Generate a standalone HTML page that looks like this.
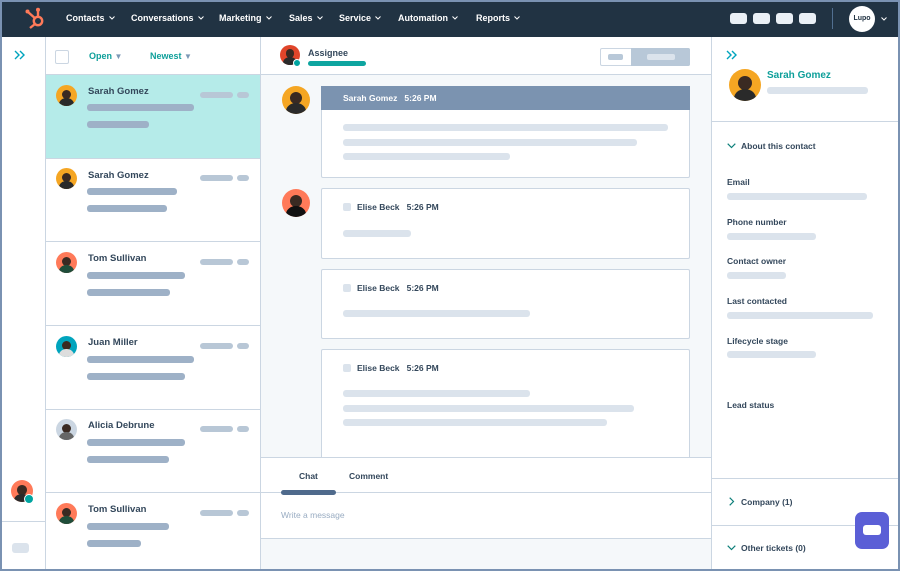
<!DOCTYPE html>
<html><head><meta charset="utf-8"><style>
*{margin:0;padding:0;box-sizing:border-box}
body{width:900px;height:571px;overflow:hidden;background:#7a92b2;font-family:"Liberation Sans",sans-serif;position:relative}
.a{position:absolute}
.nav{left:2px;top:2px;width:896px;height:35px;background:#213343}
.ni{position:absolute;top:13px;color:#fff;font-size:9px;font-weight:bold}
.ni svg{margin-left:4px;vertical-align:1px}
.w{background:#fff}
.bar{position:absolute;height:7px;border-radius:3px;background:#9eb1c7}
.lb{position:absolute;height:7px;border-radius:3px;background:#dbe3ec}
.rb{position:absolute;height:6px;border-radius:3px;background:#b8c7d6}
.nm{position:absolute;font-size:9.5px;font-weight:bold;color:#33475b}
.av{position:absolute;border-radius:50%;overflow:hidden}
.av i{position:absolute;left:28%;top:22%;width:44%;height:44%;border-radius:50%;background:#3a2a22}
.av b{position:absolute;left:15%;top:62%;width:70%;height:60%;border-radius:50% 50% 0 0;background:#2a2a2a}
.card{position:absolute;left:321px;width:369px;background:#fff;border:1px solid #cbd6e2;border-radius:2px}
.mh{position:absolute;font-size:8.5px;color:#33475b;font-weight:bold}
.mh s{display:inline-block;width:8px;height:8px;background:#dbe3ec;border-radius:2px;margin-right:6px;vertical-align:-1px;text-decoration:none}
.lab{position:absolute;left:727px;font-size:8.5px;color:#33475b;font-weight:bold}
.hl{position:absolute;height:1px;background:#cbd6e2}
.vl{position:absolute;width:1px;background:#cbd6e2}
</style></head><body>
<div class="a nav"></div>
<svg class="a" style="left:24px;top:7px" width="24" height="24" viewBox="0 0 24 24"><g stroke="#ff7a59" stroke-width="2.4" fill="none"><circle cx="14" cy="14" r="4.2"/><line x1="14" y1="9.8" x2="14" y2="3"/><line x1="10.8" y1="11" x2="4" y2="5"/><line x1="11" y1="17" x2="6" y2="21"/></g><circle cx="14" cy="2.8" r="2" fill="#ff7a59"/><circle cx="3.5" cy="4.5" r="2" fill="#ff7a59"/></svg>
<div class="ni" style="left:66px">Contacts<svg width="6" height="4" viewBox="0 0 6 4"><path d="M0.5 0.5L3 3L5.5 0.5" stroke="#fff" fill="none"/></svg></div>
<div class="ni" style="left:131px">Conversations<svg width="6" height="4" viewBox="0 0 6 4"><path d="M0.5 0.5L3 3L5.5 0.5" stroke="#fff" fill="none"/></svg></div>
<div class="ni" style="left:219px">Marketing<svg width="6" height="4" viewBox="0 0 6 4"><path d="M0.5 0.5L3 3L5.5 0.5" stroke="#fff" fill="none"/></svg></div>
<div class="ni" style="left:289px">Sales<svg width="6" height="4" viewBox="0 0 6 4"><path d="M0.5 0.5L3 3L5.5 0.5" stroke="#fff" fill="none"/></svg></div>
<div class="ni" style="left:339px">Service<svg width="6" height="4" viewBox="0 0 6 4"><path d="M0.5 0.5L3 3L5.5 0.5" stroke="#fff" fill="none"/></svg></div>
<div class="ni" style="left:398px">Automation<svg width="6" height="4" viewBox="0 0 6 4"><path d="M0.5 0.5L3 3L5.5 0.5" stroke="#fff" fill="none"/></svg></div>
<div class="ni" style="left:476px">Reports<svg width="6" height="4" viewBox="0 0 6 4"><path d="M0.5 0.5L3 3L5.5 0.5" stroke="#fff" fill="none"/></svg></div>
<div class="a" style="left:730px;top:13px;width:17px;height:11px;background:#eaf0f6;border-radius:3px"></div>
<div class="a" style="left:753px;top:13px;width:17px;height:11px;background:#eaf0f6;border-radius:3px"></div>
<div class="a" style="left:776px;top:13px;width:17px;height:11px;background:#eaf0f6;border-radius:3px"></div>
<div class="a" style="left:799px;top:13px;width:17px;height:11px;background:#eaf0f6;border-radius:3px"></div>
<div class="a" style="left:832px;top:8px;width:1px;height:21px;background:#516f90"></div>
<div class="a" style="left:849px;top:6px;width:26px;height:26px;background:#fff;border-radius:50%;font-size:7px;font-weight:bold;color:#213343;text-align:center;line-height:26px">Lupo</div>
<svg class="a" style="left:881px;top:17px" width="6" height="4" viewBox="0 0 6 4"><path d="M0.5 0.5L3 3L5.5 0.5" stroke="#fff" fill="none"/></svg>

<!-- left rail -->
<div class="a w" style="left:2px;top:37px;width:43px;height:532px"></div>
<svg class="a" style="left:14px;top:50px" width="12" height="10" viewBox="0 0 12 10"><path d="M1 1L5 5L1 9M6 1L10 5L6 9" stroke="#00a4bd" stroke-width="1.4" fill="none"/></svg>
<div class="av" style="left:11px;top:480px;width:22px;height:22px;background:#ff7a59"><i></i><b></b></div>
<div class="a" style="left:24px;top:494px;width:10px;height:10px;border-radius:50%;background:#00a4a0;border:1.5px solid #fff"></div>
<div class="hl" style="left:2px;top:521px;width:43px"></div>
<div class="a" style="left:12px;top:543px;width:17px;height:10px;background:#dbe3ec;border-radius:3px"></div>
<div class="vl" style="left:45px;top:37px;height:532px"></div>

<!-- list -->
<div class="a w" style="left:46px;top:37px;width:214px;height:532px"></div>
<div class="a" style="left:55px;top:50px;width:14px;height:14px;border:1px solid #cbd6e2;border-radius:2px"></div>
<div class="a" style="left:89px;top:51px;font-size:9px;font-weight:bold;color:#0e9f9a">Open <span style="color:#7c98b6;font-size:8px">▼</span></div>
<div class="a" style="left:150px;top:51px;font-size:9px;font-weight:bold;color:#0e9f9a">Newest <span style="color:#7c98b6;font-size:8px">▼</span></div>
<div class="hl" style="left:46px;top:74px;width:214px"></div>
<div class="a" style="left:46px;top:75px;width:214px;height:83px;background:#b5ebe9"></div>

<div class="av" style="left:56px;top:85px;width:21px;height:21px;background:#f5a623"><i></i><b></b></div>
<div class="nm" style="left:88px;top:86px">Sarah Gomez</div>
<div class="bar" style="left:87px;top:104px;width:107px"></div><div class="bar" style="left:87px;top:121px;width:62px"></div>
<div class="rb" style="left:200px;top:92px;width:33px"></div><div class="rb" style="left:237px;top:92px;width:12px"></div>
<div class="hl" style="left:46px;top:158px;width:214px"></div>

<div class="av" style="left:56px;top:168px;width:21px;height:21px;background:#f5a623"><i></i><b></b></div>
<div class="nm" style="left:88px;top:170px">Sarah Gomez</div>
<div class="bar" style="left:87px;top:188px;width:90px"></div><div class="bar" style="left:87px;top:205px;width:80px"></div>
<div class="rb" style="left:200px;top:175px;width:33px"></div><div class="rb" style="left:237px;top:175px;width:12px"></div>
<div class="hl" style="left:46px;top:241px;width:214px"></div>

<div class="av" style="left:56px;top:252px;width:21px;height:21px;background:#ff7a59"><i></i><b style="background:#1f4d3a"></b></div>
<div class="nm" style="left:88px;top:253px">Tom Sullivan</div>
<div class="bar" style="left:87px;top:272px;width:98px"></div><div class="bar" style="left:87px;top:289px;width:83px"></div>
<div class="rb" style="left:200px;top:259px;width:33px"></div><div class="rb" style="left:237px;top:259px;width:12px"></div>
<div class="hl" style="left:46px;top:325px;width:214px"></div>

<div class="av" style="left:56px;top:336px;width:21px;height:21px;background:#00a4bd"><i></i><b style="background:#ddd"></b></div>
<div class="nm" style="left:88px;top:337px">Juan Miller</div>
<div class="bar" style="left:87px;top:356px;width:107px"></div><div class="bar" style="left:87px;top:373px;width:98px"></div>
<div class="rb" style="left:200px;top:343px;width:33px"></div><div class="rb" style="left:237px;top:343px;width:12px"></div>
<div class="hl" style="left:46px;top:409px;width:214px"></div>

<div class="av" style="left:56px;top:419px;width:21px;height:21px;background:#cbd6e2"><i></i><b style="background:#666"></b></div>
<div class="nm" style="left:88px;top:420px">Alicia Debrune</div>
<div class="bar" style="left:87px;top:439px;width:98px"></div><div class="bar" style="left:87px;top:456px;width:82px"></div>
<div class="rb" style="left:200px;top:426px;width:33px"></div><div class="rb" style="left:237px;top:426px;width:12px"></div>
<div class="hl" style="left:46px;top:492px;width:214px"></div>

<div class="av" style="left:56px;top:503px;width:21px;height:21px;background:#ff7a59"><i></i><b style="background:#1f4d3a"></b></div>
<div class="nm" style="left:88px;top:504px">Tom Sullivan</div>
<div class="bar" style="left:87px;top:523px;width:82px"></div><div class="bar" style="left:87px;top:540px;width:54px"></div>
<div class="rb" style="left:200px;top:510px;width:33px"></div><div class="rb" style="left:237px;top:510px;width:12px"></div>
<div class="vl" style="left:260px;top:37px;height:532px"></div>

<!-- conversation -->
<div class="a" style="left:261px;top:37px;width:450px;height:532px;background:#f5f8fa"></div>
<div class="a w" style="left:261px;top:37px;width:450px;height:37px"></div>
<div class="hl" style="left:261px;top:74px;width:450px"></div>
<div class="av" style="left:280px;top:45px;width:20px;height:20px;background:#e0452a"><i></i><b></b></div>
<div class="a" style="left:293px;top:59px;width:8px;height:8px;border-radius:50%;background:#00a4a0;border:1px solid #fff"></div>
<div class="a" style="left:308px;top:48px;font-size:9px;font-weight:bold;color:#33475b">Assignee</div>
<div class="a" style="left:308px;top:61px;width:58px;height:5px;border-radius:3px;background:#0ea5a0"></div>
<div class="a" style="left:600px;top:48px;width:90px;height:18px;border:1px solid #cbd6e2;border-radius:2px;background:#fff"></div>
<div class="a" style="left:631px;top:48px;width:59px;height:18px;background:#b8c8d8;border-radius:0 2px 2px 0"></div>
<div class="a" style="left:608px;top:54px;width:15px;height:6px;background:#b8c8d8;border-radius:2px"></div>
<div class="a" style="left:647px;top:54px;width:28px;height:6px;background:#dbe3ec;border-radius:2px"></div>

<div class="av" style="left:282px;top:86px;width:28px;height:28px;background:#f5a623"><i></i><b></b></div>
<div class="card" style="top:86px;height:92px"></div>
<div class="a" style="left:321px;top:86px;width:369px;height:24px;background:#7b93b0"></div>
<div class="a" style="left:343px;top:93px;font-size:8.5px;font-weight:bold;color:#fff">Sarah Gomez&nbsp;&nbsp; 5:26 PM</div>
<div class="lb" style="left:343px;top:124px;width:325px"></div><div class="lb" style="left:343px;top:139px;width:294px"></div><div class="lb" style="left:343px;top:153px;width:167px"></div>

<div class="av" style="left:282px;top:189px;width:28px;height:28px;background:#ff7a59"><i></i><b style="background:#111"></b></div>
<div class="card" style="top:188px;height:71px"></div>
<div class="mh" style="left:343px;top:202px"><s></s>Elise Beck&nbsp;&nbsp; 5:26 PM</div>
<div class="lb" style="left:343px;top:230px;width:68px"></div>

<div class="card" style="top:269px;height:70px"></div>
<div class="mh" style="left:343px;top:283px"><s></s>Elise Beck&nbsp;&nbsp; 5:26 PM</div>
<div class="lb" style="left:343px;top:310px;width:187px"></div>

<div class="card" style="top:349px;height:120px"></div>
<div class="mh" style="left:343px;top:363px"><s></s>Elise Beck&nbsp;&nbsp; 5:26 PM</div>
<div class="lb" style="left:343px;top:390px;width:187px"></div><div class="lb" style="left:343px;top:405px;width:291px"></div><div class="lb" style="left:343px;top:419px;width:264px"></div>

<div class="a w" style="left:261px;top:457px;width:450px;height:81px;border-top:1px solid #cbd6e2"></div>
<div class="a" style="left:299px;top:471px;font-size:8.5px;font-weight:bold;color:#33475b">Chat</div>
<div class="a" style="left:349px;top:471px;font-size:8.5px;font-weight:bold;color:#33475b">Comment</div>
<div class="hl" style="left:261px;top:492px;width:450px"></div>
<div class="a" style="left:281px;top:490px;width:55px;height:5px;border-radius:3px;background:#4f6a8c"></div>
<div class="a" style="left:281px;top:510px;font-size:8.5px;color:#99acc2">Write a message</div>
<div class="hl" style="left:261px;top:538px;width:450px"></div>
<div class="vl" style="left:711px;top:37px;height:532px"></div>

<!-- right panel -->
<div class="a w" style="left:712px;top:37px;width:186px;height:532px"></div>
<svg class="a" style="left:726px;top:50px" width="12" height="10" viewBox="0 0 12 10"><path d="M1 1L5 5L1 9M6 1L10 5L6 9" stroke="#00a4bd" stroke-width="1.4" fill="none"/></svg>
<div class="av" style="left:729px;top:69px;width:32px;height:32px;background:#f5a623"><i></i><b></b></div>
<div class="a" style="left:767px;top:70px;font-size:10px;font-weight:bold;color:#0e9f9a">Sarah Gomez</div>
<div class="lb" style="left:767px;top:87px;width:101px"></div>
<div class="hl" style="left:712px;top:121px;width:186px"></div>
<svg class="a" style="left:727px;top:143px" width="9" height="6" viewBox="0 0 9 6"><path d="M0.7 0.7L4.5 4.5L8.3 0.7" stroke="#0e7f7a" stroke-width="1.2" fill="none"/></svg>
<div class="a" style="left:741px;top:141px;font-size:8.5px;font-weight:bold;color:#33475b">About this contact</div>
<div class="lab" style="top:177px">Email</div><div class="lb" style="left:727px;top:193px;width:140px"></div>
<div class="lab" style="top:217px">Phone number</div><div class="lb" style="left:727px;top:233px;width:89px"></div>
<div class="lab" style="top:256px">Contact owner</div><div class="lb" style="left:727px;top:272px;width:59px"></div>
<div class="lab" style="top:296px">Last contacted</div><div class="lb" style="left:727px;top:312px;width:146px"></div>
<div class="lab" style="top:336px">Lifecycle stage</div><div class="lb" style="left:727px;top:351px;width:89px"></div>
<div class="lab" style="top:400px">Lead status</div>
<div class="hl" style="left:712px;top:478px;width:186px"></div>
<svg class="a" style="left:729px;top:497px" width="6" height="9" viewBox="0 0 6 9"><path d="M0.7 0.7L4.5 4.5L0.7 8.3" stroke="#0e7f7a" stroke-width="1.2" fill="none"/></svg>
<div class="a" style="left:741px;top:497px;font-size:8.5px;font-weight:bold;color:#33475b">Company (1)</div>
<div class="hl" style="left:712px;top:525px;width:186px"></div>
<svg class="a" style="left:727px;top:545px" width="9" height="6" viewBox="0 0 9 6"><path d="M0.7 0.7L4.5 4.5L8.3 0.7" stroke="#0e7f7a" stroke-width="1.2" fill="none"/></svg>
<div class="a" style="left:741px;top:543px;font-size:8.5px;font-weight:bold;color:#33475b">Other tickets (0)</div>
<div class="a" style="left:855px;top:512px;width:34px;height:37px;background:#5b5fd6;border-radius:7px"></div>
<div class="a" style="left:863px;top:525px;width:18px;height:10px;background:#fff;border-radius:3px"></div>
</body></html>
